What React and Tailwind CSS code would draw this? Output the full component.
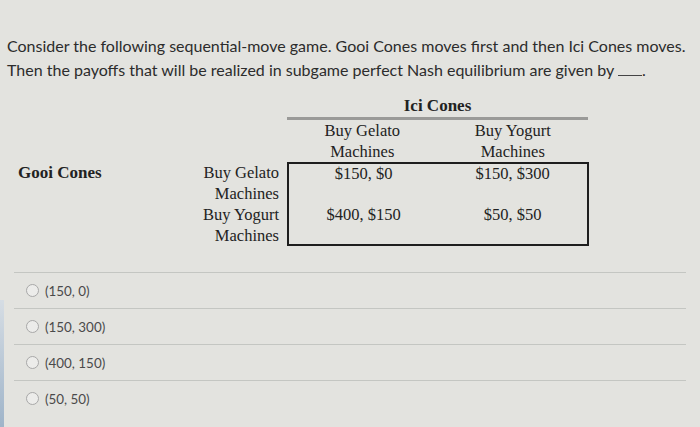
import React from 'react'

const options = ['(150, 0)', '(150, 300)', '(400, 150)', '(50, 50)']

const serif = { fontFamily: '"Liberation Serif", "Times New Roman", serif' }

const App = () => {
  return (
    <div
      className="relative w-[700px] h-[427px] overflow-hidden bg-[#e3e3df] text-[#2c2c2c]"
      style={{ fontFamily: 'Lato, "Open Sans", sans-serif' }}
    >
      {/* bluish edge of the photographed screen */}
      <div className="absolute left-0 top-[300px] bottom-0 w-[4px] bg-gradient-to-b from-[#d6dde4] to-[#9fb4c9]"></div>

      {/* question */}
      <div className="pt-[34px] pl-[7px] text-[16px] leading-[24px]">
        <p>Consider the following sequential-move game. Gooi Cones moves first and then Ici Cones moves.</p>
        <p>
          Then the payoffs that will be realized in subgame perfect Nash equilibrium are given by{' '}
          <span className="inline-block w-[24px] border-b border-[#444] align-baseline"></span>.
        </p>
      </div>

      {/* payoff table */}
      <div className="mt-[14px] text-[16.5px] leading-[20.7px] text-[#222]" style={serif}>
        <div className="ml-[287px] w-[301px]">
          <div className="text-center font-bold text-[17px] leading-[20px]">Ici Cones</div>
          <div className="h-[3px] bg-[#9a9a98] mt-[1px]"></div>
          <div className="grid grid-cols-2 text-center mt-[1px]">
            <div>Buy Gelato<br />Machines</div>
            <div>Buy Yogurt<br />Machines</div>
          </div>
        </div>
        <div className="flex">
          <div className="w-[287px] flex pt-[1px]">
            <div className="pl-[18px] font-bold text-[17px]">Gooi Cones</div>
            <div className="ml-auto pr-[8px] text-right">
              Buy Gelato<br />Machines<br />Buy Yogurt<br />Machines
            </div>
          </div>
          <div className="w-[302px] h-[84px] border-[2px] border-[#1e1e1e] flex flex-col text-center">
            <div className="grid grid-cols-2 h-[41px]">
              <div>$150, $0</div>
              <div>$150, $300</div>
            </div>
            <div className="grid grid-cols-2">
              <div>$400, $150</div>
              <div>$50, $50</div>
            </div>
          </div>
        </div>
      </div>

      {/* answers */}
      <div className="mt-[26px] ml-[14px] w-[672px] text-[13.4px] text-[#4a4a4a]">
        {options.map((o) => (
          <div key={o} className="border-t border-[#c4c6c2] h-[36px] flex items-center pl-[12px]">
            <span className="w-[13px] h-[13px] rounded-full border border-[#a8a8a8] bg-[#ececea] mr-[6px]"></span>
            <span>{o}</span>
          </div>
        ))}
      </div>
    </div>
  )
}

export default App
